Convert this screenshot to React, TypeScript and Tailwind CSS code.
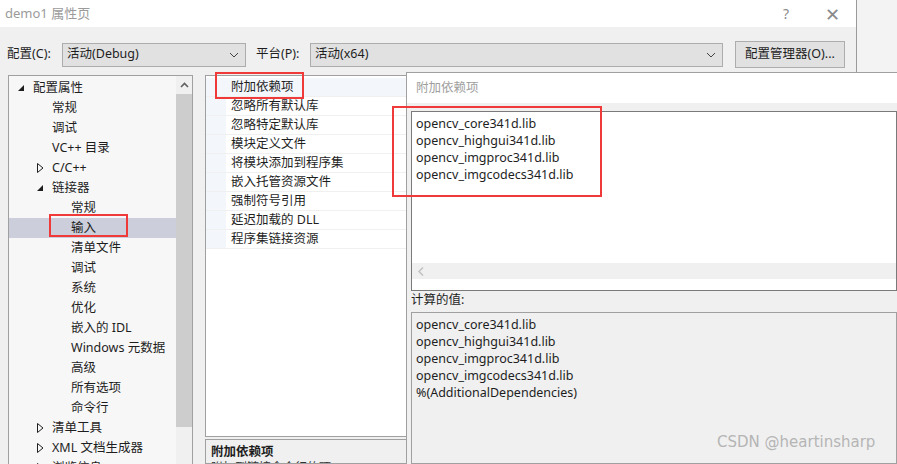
import React from "react";

const F = { fontFamily: '"Noto Sans", "Noto Sans CJK SC", sans-serif' };

function Expanded() {
  return (
    <svg width="7" height="7" viewBox="0 0 7 7" className="shrink-0">
      <polygon points="6,0 6,6 0,6" fill="#1e1e1e" />
    </svg>
  );
}
function Collapsed() {
  return (
    <svg width="7" height="10" viewBox="0 0 7 10" className="shrink-0">
      <polygon points="0.5,0.5 6,5 0.5,9.5" fill="none" stroke="#1e1e1e" strokeWidth="1" />
    </svg>
  );
}
function Chevron() {
  return (
    <svg width="10" height="6" viewBox="0 0 10 6">
      <polyline points="1,1 5,5 9,1" fill="none" stroke="#444" strokeWidth="1" />
    </svg>
  );
}

type Node = { label: string; level: number; arrow?: "e" | "c"; sel?: boolean };
const tree: Node[] = [
  { label: "配置属性", level: 0, arrow: "e" },
  { label: "常规", level: 1 },
  { label: "调试", level: 1 },
  { label: "VC++ 目录", level: 1 },
  { label: "C/C++", level: 1, arrow: "c" },
  { label: "链接器", level: 1, arrow: "e" },
  { label: "常规", level: 2 },
  { label: "输入", level: 2, sel: true },
  { label: "清单文件", level: 2 },
  { label: "调试", level: 2 },
  { label: "系统", level: 2 },
  { label: "优化", level: 2 },
  { label: "嵌入的 IDL", level: 2 },
  { label: "Windows 元数据", level: 2 },
  { label: "高级", level: 2 },
  { label: "所有选项", level: 2 },
  { label: "命令行", level: 2 },
  { label: "清单工具", level: 1, arrow: "c" },
  { label: "XML 文档生成器", level: 1, arrow: "c" },
  { label: "浏览信息", level: 1, arrow: "c" },
];

const props = [
  "附加依赖项",
  "忽略所有默认库",
  "忽略特定默认库",
  "模块定义文件",
  "将模块添加到程序集",
  "嵌入托管资源文件",
  "强制符号引用",
  "延迟加载的 DLL",
  "程序集链接资源",
];

const libs = [
  "opencv_core341d.lib",
  "opencv_highgui341d.lib",
  "opencv_imgproc341d.lib",
  "opencv_imgcodecs341d.lib",
];

export default function App() {
  return (
    <div className="relative w-[897px] h-[464px] overflow-hidden bg-[#f3f3f3] text-[12px] text-[#1e1e1e]" style={F}>
      {/* main dialog */}
      <div className="w-[857px] h-[464px] flex flex-col bg-[#f0f0f0] border-r border-[#9a9a9a]">
        {/* title bar */}
        <div className="h-[27px] bg-white flex items-center pl-[5px] shrink-0">
          <span className="text-[13px] text-[#9b9b9b]">demo1 属性页</span>
          <span className="ml-auto text-[14px] text-[#8a8a8a] mr-[36px]">?</span>
          <span className="text-[18px] leading-none text-[#8a8a8a] font-light mr-[16px]">✕</span>
        </div>
        {/* toolbar */}
        <div className="h-[45px] shrink-0 flex items-center pl-[7px] pt-[10px]">
          <span className="text-[12.5px] w-[55px]">配置(C):</span>
          <div className="w-[184px] h-[24px] bg-[#e1e1e1] border border-[#adadad] flex items-center pl-[4px] pr-[6px]">
            <span className="text-[12.5px]">活动(Debug)</span>
            <span className="ml-auto"><Chevron /></span>
          </div>
          <span className="text-[12.5px] ml-[10px] w-[54px]">平台(P):</span>
          <div className="w-[413px] h-[24px] bg-[#e1e1e1] border border-[#adadad] flex items-center pl-[4px] pr-[6px]">
            <span className="text-[12.5px]">活动(x64)</span>
            <span className="ml-auto"><Chevron /></span>
          </div>
          <div className="ml-[12px] w-[110px] h-[27px] bg-[#e1e1e1] border border-[#adadad] flex items-center justify-center">
            <span className="text-[12.5px]">配置管理器(O)...</span>
          </div>
        </div>
        {/* content */}
        <div className="flex-1 flex pt-[3px] pl-[8px] min-h-0">
          {/* tree */}
          <div className="w-[185px] h-[400px] border border-[#a0a0a0] bg-[#f7f7f7] flex shrink-0">
            <div className="flex-1 pt-[2px]">
              {tree.map((n, i) => (
                <div key={i} className={`h-[20px] flex items-center ${n.sel ? "bg-[#cccedb]" : ""}`}>
                  <div
                    className="flex items-center"
                    style={{ paddingLeft: 6 + n.level * 19 }}
                  >
                    <span className="w-[18px] flex items-center justify-start pl-[3px]">
                      {n.arrow === "e" ? <Expanded /> : n.arrow === "c" ? <Collapsed /> : null}
                    </span>
                    <span className="text-[12.5px] whitespace-nowrap">{n.label}</span>
                  </div>
                </div>
              ))}
            </div>
            <div className="w-[16px] bg-[#f0f0f0] flex flex-col items-center">
              <div className="h-[18px] flex items-center justify-center">
                <svg width="9" height="6" viewBox="0 0 9 6">
                  <polyline points="1,5 4.5,1.5 8,5" fill="none" stroke="#606060" strokeWidth="1.6" />
                </svg>
              </div>
              <div className="w-[16px] h-[333px] bg-[#cdcdcd]" />
            </div>
          </div>
          {/* property grid */}
          <div className="ml-[12px] w-[202px] flex flex-col shrink-0 min-h-0">
            <div className="h-[362px] shrink-0 border border-[#a0a0a0] bg-white flex flex-col pt-[2px]">
              {props.map((p, i) => (
                <div key={i} className="h-[19px] shrink-0 flex border-b border-[#f0f0f0]">
                  <div className="w-[20px] bg-[#f3f6fb]" />
                  <div className={`flex-1 flex items-center pl-[5px] ${i === 0 ? "bg-[#f3f6fb]" : ""}`}>
                    <span className="text-[12.5px] whitespace-nowrap">{p}</span>
                  </div>
                </div>
              ))}
              <div className="flex-1" />
            </div>
            <div className="mt-[2px] flex-1 min-h-0 overflow-hidden border border-[#a0a0a0] bg-[#f0f0f0] pl-[5px] pt-[3px]">
              <div className="text-[12.5px] font-bold leading-[18px]">附加依赖项</div>
              <div className="text-[12px] text-[#333] whitespace-nowrap leading-[14px]">附加到链接命令行的项</div>
            </div>
          </div>
        </div>
      </div>

      {/* red highlight on 输入 and 附加依赖项 */}
      <div className="absolute left-[49px] top-[214px] w-[79px] h-[23px] border-2 border-[#f03a3a]" />
      <div className="absolute left-[215px] top-[72px] w-[89px] h-[27px] border-2 border-[#f03a3a] z-10" />

      {/* overlapping edit window */}
      <div className="absolute left-[406px] top-[72px] right-0 bottom-0 border-l border-t border-[#a0a0a0] bg-[#f0f0f0] flex flex-col">
        <div className="h-[30px] bg-white flex items-center pl-[9px] shrink-0">
          <span className="text-[12.5px] text-[#a0a0a0]">附加依赖项</span>
        </div>
        <div className="flex-1 flex flex-col pl-[4px] pt-[8px]">
          <div className="h-[180px] border border-[#7a7a7a] bg-white flex flex-col">
            <div className="flex-1 pl-[4px] pt-[3px]">
              {libs.map((l) => (
                <div key={l} className="h-[17px] leading-[17px] text-[12.5px]">{l}</div>
              ))}
            </div>
            <div className="h-[16px] bg-[#f0f0f0] flex items-center pl-[6px] mb-[11px]">
              <svg width="6" height="9" viewBox="0 0 6 9">
                <polyline points="5,0.5 1,4.5 5,8.5" fill="none" stroke="#c0c0c0" strokeWidth="1.5" />
              </svg>
            </div>
          </div>
          <div className="h-[21px] flex items-end pb-[2px] text-[12.5px]">计算的值:</div>
          <div className="flex-1 border border-[#a0a0a0] bg-[#f0f0f0] pl-[4px] pt-[3px]">
            {[...libs, "%(AdditionalDependencies)"].map((l) => (
              <div key={l} className="h-[17px] leading-[17px] text-[12.5px]">{l}</div>
            ))}
          </div>
        </div>
      </div>

      <div className="absolute left-[392px] top-[106px] w-[210px] h-[91px] border-2 border-[#f03a3a]" />

      {/* watermark */}
      <div className="absolute left-[717px] top-[431px] text-[15px] text-[#b5b5b5]" style={{ fontFamily: '"DejaVu Sans", sans-serif' }}>
        CSDN @heartinsharp
      </div>
    </div>
  );
}
